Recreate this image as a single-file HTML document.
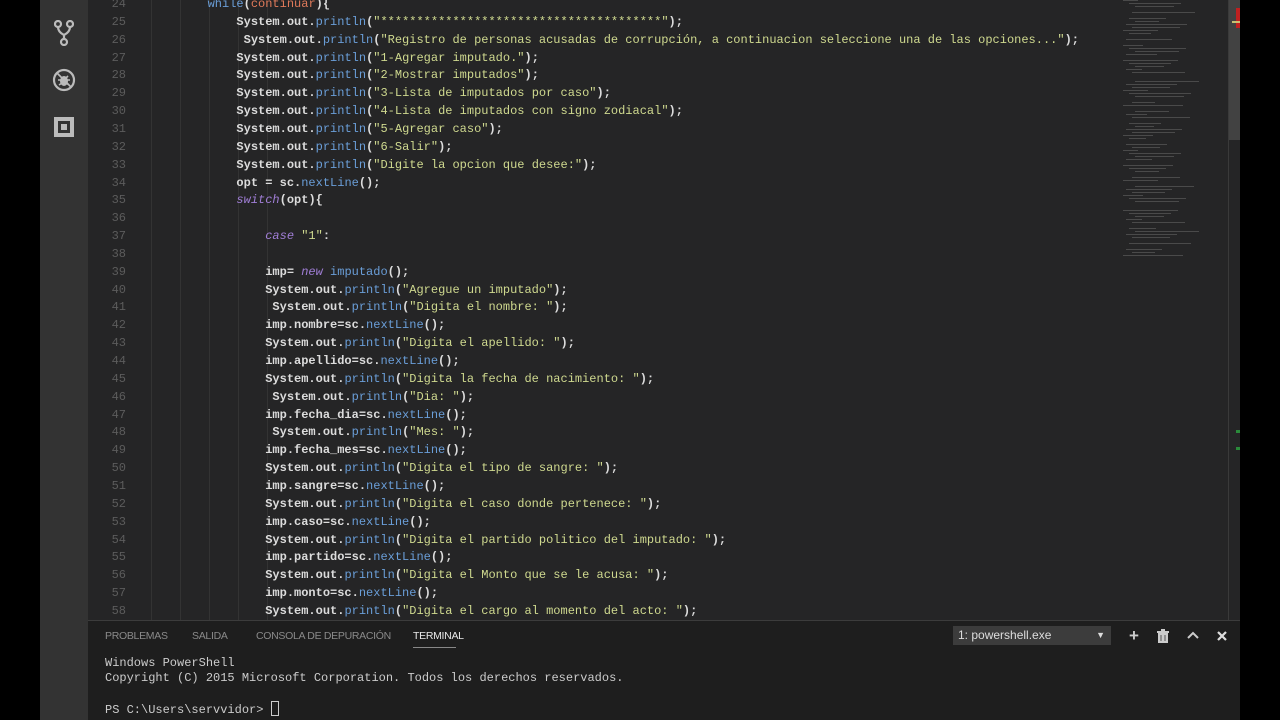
<!DOCTYPE html>
<html><head><meta charset="utf-8"><style>
*{margin:0;padding:0;box-sizing:border-box}
body{width:1280px;height:720px;background:#000;position:relative;overflow:hidden;font-family:"Liberation Mono",monospace}
#act{position:absolute;left:40px;top:0;width:48px;height:720px;background:#333333}
#ed{position:absolute;left:88px;top:0;width:1152px;height:620px;background:#252526;overflow:hidden}
.ln{position:absolute;left:0;width:38px;text-align:right;color:#5c5c5c;font-size:12px;height:17.85px;line-height:17.85px}
.cl{position:absolute;left:62px;white-space:pre;color:#dcdcdc;font-size:12px;height:17.85px;line-height:17.85px;font-weight:bold;letter-spacing:0}
.s{color:#cfd98f;font-weight:normal}
.m{color:#6a9ed8;font-weight:normal}
.k{color:#a07ed6;font-style:italic;font-weight:normal}
.v{color:#e07a5a;font-weight:normal}
.g{position:absolute;top:0;width:1px;height:620px;background:#333}
#panel{position:absolute;left:88px;top:620px;width:1152px;height:100px;background:#1e1e1e;border-top:1px solid #3c3c3c}
.tab{position:absolute;top:9px;font-family:"Liberation Sans",sans-serif;font-size:10.5px;color:#8a8a8a;letter-spacing:-0.3px}
.term{position:absolute;left:17px;white-space:pre;color:#cccccc;font-size:12px}
#mini{position:absolute;left:1027px;top:0;width:113px;height:270px}
.mm{position:absolute;height:1px;background:#777;opacity:.45}
</style></head><body>
<div id="act">
<svg style="position:absolute;left:14px;top:20px" width="20" height="26" viewBox="0 0 20 26"><circle cx="4" cy="4" r="3" fill="none" stroke="#bbb" stroke-width="2.2"/><circle cx="16" cy="4" r="3" fill="none" stroke="#bbb" stroke-width="2.2"/><circle cx="10" cy="22" r="3" fill="none" stroke="#bbb" stroke-width="2.2"/><path d="M4 7 Q4 12 10 15 Q16 12 16 7 M10 15 V19" fill="none" stroke="#bbb" stroke-width="2.2"/></svg>
<svg style="position:absolute;left:12px;top:68px" width="24" height="24" viewBox="0 0 24 24"><circle cx="12" cy="12" r="10" fill="none" stroke="#bbb" stroke-width="2.2"/><ellipse cx="12" cy="13" rx="4" ry="5" fill="#bbb"/><path d="M5 5 L19 19 M6 12h4 M14 12h4 M7 17l3-2 M17 17l-3-2 M8 8l2 2 M16 8l-2 2" stroke="#bbb" stroke-width="1.6"/></svg>
<svg style="position:absolute;left:13px;top:116px" width="22" height="22" viewBox="0 0 22 22"><path d="M1 1h20v20H1z M5 5v12h12V5z" fill="#bbb" fill-rule="evenodd"/><rect x="8" y="8" width="6" height="6" fill="#bbb"/></svg>
</div>
<div id="ed">
<div class="g" style="left:63px"></div><div class="g" style="left:92px"></div><div class="g" style="left:121px"></div><div class="g" style="left:150px"></div><div class="g" style="left:179px"></div>
<div id="lines"></div>
<div id="mini"></div>
<div style="position:absolute;left:1140px;top:0;width:12px;height:140px;background:#424242"></div>
<div style="position:absolute;left:1140px;top:0;width:1px;height:620px;background:#3a3a3a"></div>
<div style="position:absolute;left:1148px;top:8px;width:4px;height:20px;background:#c02020"></div>
<div style="position:absolute;left:1144px;top:21px;width:8px;height:2px;background:#c8c070"></div>
<div style="position:absolute;left:1148px;top:430px;width:4px;height:3px;background:#2a8a3a"></div>
<div style="position:absolute;left:1148px;top:447px;width:4px;height:3px;background:#2a8a3a"></div>
</div>
<div id="panel">
<div class="tab" style="left:17px">PROBLEMAS</div>
<div class="tab" style="left:104px">SALIDA</div>
<div class="tab" style="left:168px">CONSOLA DE DEPURACIÓN</div>
<div class="tab" style="left:325px;color:#e8e8e8">TERMINAL</div>
<div style="position:absolute;left:325px;top:26px;width:43px;height:1px;background:#888"></div>
<div style="position:absolute;left:865px;top:5px;width:158px;height:19px;background:#3c3c3c;color:#ddd;font-family:'Liberation Sans',sans-serif;font-size:12px;line-height:19px;padding-left:5px">1: powershell.exe<span style="position:absolute;right:6px;font-size:9px">▼</span></div>
<div style="position:absolute;left:1041px;top:5px;color:#ccc;font-size:17px;font-family:'Liberation Sans',sans-serif;font-weight:bold">+</div>
<svg style="position:absolute;left:1069px;top:8px" width="12" height="14" viewBox="0 0 12 14"><path d="M0 2h12v2H0z M4 0h4v2H4z M1 4h10v10H1z" fill="#ccc"/><path d="M4 6v6M8 6v6" stroke="#555" stroke-width="1"/></svg>
<svg style="position:absolute;left:1099px;top:10px" width="12" height="8" viewBox="0 0 12 8"><path d="M1 7L6 2L11 7" fill="none" stroke="#ccc" stroke-width="2"/></svg>
<svg style="position:absolute;left:1129px;top:10px" width="10" height="10" viewBox="0 0 10 10"><path d="M1 1L9 9M9 1L1 9" stroke="#ddd" stroke-width="2.2"/></svg>
<div class="term" style="top:35px">Windows PowerShell</div>
<div class="term" style="top:50px">Copyright (C) 2015 Microsoft Corporation. Todos los derechos reservados.</div>
<div class="term" style="top:80px">PS C:\Users\servvidor&gt; <span style="display:inline-block;width:8px;height:15px;border:1px solid #ccc;vertical-align:-3px"></span></div>
</div>
<script>
const so=(ind,str)=>' '.repeat(ind)+'System.out.<span class="m">println</span>(<span class="s">"'+str+'"</span>);';
const nl=(ind,v)=>' '.repeat(ind)+v+'=sc.<span class="m">nextLine</span>();';
const L=[
 [24,'        <span class="m">while</span>(<span class="v">continuar</span>){'],
 [25,so(12,'*'.repeat(39))],
 [26,so(13,'Registro de personas acusadas de corrupción, a continuacion seleccione una de las opciones...')],
 [27,so(12,'1-Agregar imputado.')],
 [28,so(12,'2-Mostrar imputados')],
 [29,so(12,'3-Lista de imputados por caso')],
 [30,so(12,'4-Lista de imputados con signo zodiacal')],
 [31,so(12,'5-Agregar caso')],
 [32,so(12,'6-Salir')],
 [33,so(12,'Digite la opcion que desee:')],
 [34,'            opt = sc.<span class="m">nextLine</span>();'],
 [35,'            <span class="k">switch</span>(opt){'],
 [36,''],
 [37,'                <span class="k">case</span> <span class="s">"1"</span>:'],
 [38,''],
 [39,'                imp= <span class="k">new</span> <span class="m">imputado</span>();'],
 [40,so(16,'Agregue un imputado')],
 [41,so(17,'Digita el nombre: ')],
 [42,nl(16,'imp.nombre')],
 [43,so(16,'Digita el apellido: ')],
 [44,nl(16,'imp.apellido')],
 [45,so(16,'Digita la fecha de nacimiento: ')],
 [46,so(17,'Dia: ')],
 [47,nl(16,'imp.fecha_dia')],
 [48,so(17,'Mes: ')],
 [49,nl(16,'imp.fecha_mes')],
 [50,so(16,'Digita el tipo de sangre: ')],
 [51,nl(16,'imp.sangre')],
 [52,so(16,'Digita el caso donde pertenece: ')],
 [53,nl(16,'imp.caso')],
 [54,so(16,'Digita el partido politico del imputado: ')],
 [55,nl(16,'imp.partido')],
 [56,so(16,'Digita el Monto que se le acusa: ')],
 [57,nl(16,'imp.monto')],
 [58,so(16,'Digita el cargo al momento del acto: ')]
];
let h='';
L.forEach((l,i)=>{const t=(-4+i*17.85).toFixed(2);
h+='<div class="ln" style="top:'+t+'px">'+l[0]+'</div><div class="cl" style="top:'+t+'px">'+l[1]+'</div>';});
document.getElementById('lines').innerHTML=h;
let m='';
for(let i=0;i<86;i++){const y=i*3;if(i%7==5||i%11==3)continue;const x=8+((i*7)%5)*3;const w=15+((i*37)%50);
m+='<div class="mm" style="top:'+y+'px;left:'+x+'px;width:'+w+'px"></div>';}
document.getElementById('mini').innerHTML=m;
</script>
</body></html>
